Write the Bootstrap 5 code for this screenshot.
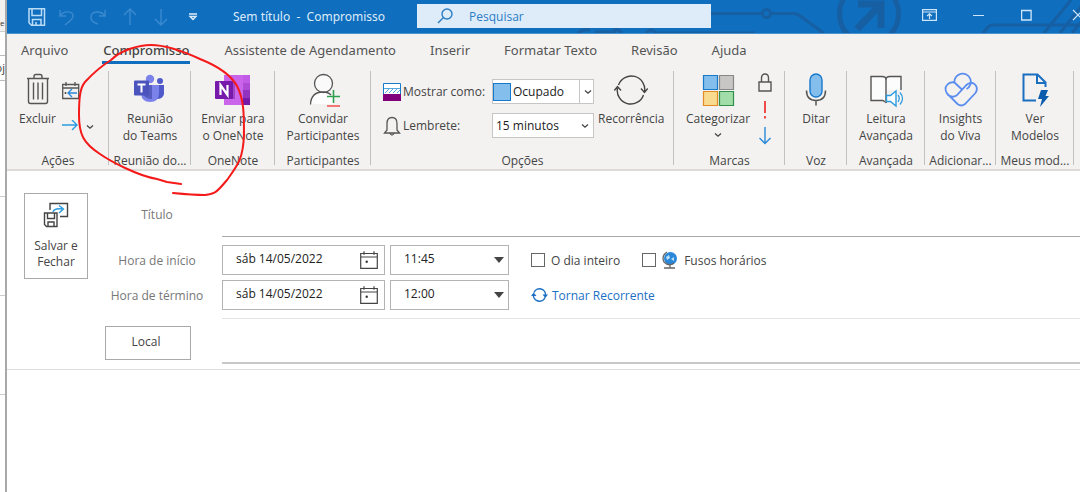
<!DOCTYPE html>
<html lang="pt-BR">
<head>
<meta charset="utf-8">
<meta name="viewport" content="width=device-width, initial-scale=1">
<title>Sem título - Compromisso</title>
<link href="https://cdn.jsdelivr.net/npm/bootstrap@5.3.0/dist/css/bootstrap.min.css" rel="stylesheet">
<style>
  body { font-family: "Open Sans", "Noto Sans", sans-serif; font-size: 12px; line-height: 17px; color: #444; background: #fff; overflow: hidden; }
  button, input, select { font: inherit; color: inherit; }
  svg { display: block; flex: none; fill: none; }
  .behind { width: 7px; border-right: 2px solid #a9a9a9; background: #fff; overflow: hidden; color: #333; }
  .behind-head { height: 32px; background: #f3f2f1; border-bottom: 1px solid #ccc; padding-top: 14px; font-size: 8px; }
  .behind-tab { height: 26px; margin-top: 23px; border: solid #bbb; border-width: 1px 0; line-height: 24px; font-size: 11px; }
  .behind-cell { height: 99px; border-top: 1px solid #ccc; }
  .behind-cell.first { margin-top: 115px; }
  .titlebar { height: 34px; background: #106ebe; color: #dcecfa; border-bottom: 1px solid #4b91ce; }
  .titlebar .circuit { right: 0; top: 0; }
  .tool { background: none; border: 0; padding: 0; }
  .quick { width: 410px; padding-left: 20px; }
  .quick .tool { width: 31px; }
  .doc-name { font-family: "Noto Sans", "Open Sans", sans-serif; }
  .search { background: #deecf9; width: 294px; height: 24px; color: #2b7cc4; padding-left: 20px; }
  .search input { background: none; border: 0; outline: 0; }
  .search input::placeholder { color: #2b7cc4; opacity: 1; }
  .wincontrols { margin-right: -4px; padding-bottom: 3px; }
  .tabs { background: #f3f2f1; height: 32px; font-family: "Noto Sans", "Open Sans", sans-serif; font-size: 13px; padding-left: 14px; gap: 34px; color: #555; }
  .tabs a { color: inherit; text-decoration: none; padding-top: 8px; height: 30px; white-space: nowrap; }
  .tabs a.current { border-bottom: 3px solid #106ebe; font-weight: 500; color: #444; padding-left: 1px; padding-right: 1px; }
  .ribbon { background: #f3f2f1; height: 105px; border-bottom: 2px solid #dcdbda; }
  .group { padding: 6px 0 0; height: 99px; position: relative; flex: none; }
  .group::after { content: ""; position: absolute; right: 0; top: 5px; bottom: 0; width: 1px; background: #c3c1bf; }
  .group-name { position: absolute; left: 0; right: 0; top: 86px; text-align: center; white-space: nowrap; }
  .w-62 { width: 62px; } .w-71 { width: 71px; } .w-78 { width: 78px; } .w-82 { width: 82px; }
  .w-84 { width: 84px; } .w-96 { width: 96px; } .w-102 { width: 102px; } .w-111 { width: 111px; } .w-303 { width: 303px; }
  .big { background: none; border: 0; padding: 0; text-align: center; white-space: nowrap; display: flex; flex-direction: column; align-items: center; }
  .big svg { margin-bottom: 2px; }
  .options { padding: 7px 0 0 12px; row-gap: 9px; display: grid; grid-template-columns: 109px 102px; }
  .options label { display: flex; align-items: center; gap: 2px; white-space: nowrap; }
  .combo { background: #fff; border: 1px solid #c8c6c4; height: 25px; }
  .combo select { appearance: none; background: none; border: 0; outline: 0; padding: 0 3px; color: #222; min-width: 0; }
  .combo select.after-swatch { padding: 0 0 0 2px; }
  .swatch { width: 18px; height: 18px; background: #83beec; border: 1px solid #1979ca; flex: none; }
  .combo .split { border-left: 1px solid #c8c6c4; height: 23px; width: 14px; display: flex; align-items: center; }
  .form-area { padding: 21px 0 5px 17px; border-bottom: 1px solid #dedede; }
  .boxbtn { background: #fff; border: 1px solid #aaa; }
  .save { width: 64px; height: 86px; line-height: 16px; margin-top: 1px; }
  .save svg { margin-bottom: 10px; }
  .fields { display: grid; grid-template-columns: 104px 1fr; column-gap: 13px; margin-left: 17px; }
  .fields .name { color: #777; text-align: center; align-self: center; }
  .fields .name.upper { padding-bottom: 8px; }
  .plain { border: 0; outline: 0; width: 100%; padding: 0 14px; }
  .line-title { height: 45px; border-bottom: 1px solid #aaa; margin-bottom: 8px; }
  .line-local { height: 46px; border-top: 1px solid #e3e3e3; border-bottom: 2px solid #c8c8c8; margin-top: 8px; }
  .when { height: 30px; gap: 5px; }
  .second { margin-top: 5px; }
  .field { border: 1px solid #b5b3b1; height: 30px; color: #222; background: #fff; }
  .field.date { width: 163px; } .field.time { width: 119px; }
  .field input, .field select { appearance: none; border: 0; outline: 0; background: none; padding: 0 0 4px 13px; width: 100%; min-width: 0; }
  .pick { margin-right: 6px; }
  .check-line { display: flex; align-items: center; gap: 6px; margin-left: 17px; }
  .tick { width: 14px; height: 14px; appearance: none; border: 1px solid #666; margin: 0; background: #fff; }
  .tick:checked { background: #106ebe; }
  .recur { color: #1a6fc4; text-decoration: none; gap: 4px; }
  .local { height: 34px; width: 86px; padding: 0 4px 4px 0; }
  .ink { position: absolute; left: 0; top: 0; pointer-events: none; }
</style>
</head>
<body>
<svg width="0" height="0" class="position-absolute" aria-hidden="true">
  <symbol id="chev" viewBox="0 0 8 6"><path d="M1 1.5l3 2.7 3-2.7" stroke="#444" stroke-width="1.3" fill="none"/></symbol>
  <symbol id="cal" viewBox="0 0 18 18"><path d="M.7 2.5h16.600v14.800H.7zM.7 6h16.600M4 .3v3.500M14 .3v3.500" stroke="#444" stroke-width="1.200" fill="none"/><circle cx="6.700" cy="10.700" r="1.200" fill="#333"/></symbol>
  <symbol id="loop" viewBox="0 0 34 32"><path d="M4.500 11A13.500 13.500 0 0 1 30.500 18M29.500 21A13.500 13.500 0 0 1 3.500 14M27 14.500l3.500 4 3.300-4M.3 16.500L3.500 12.500l3.500 4" stroke="currentColor" fill="none"/></symbol>
  <symbol id="loop-small" viewBox="0 0 17 16"><path d="M3 5.500A6 6 0 0 1 14.500 8.500M14 10.500A6 6 0 0 1 2.500 7.500" stroke="currentColor" stroke-width="1.500" fill="none"/><path d="M11.500 7.500H17l-2.700 3.500zM0 9h5.500L2.700 5.500z" fill="currentColor"/></symbol>
</svg>
<div class="d-flex vh-100 position-relative">
  <div class="behind flex-shrink-0" aria-hidden="true">
    <div class="behind-head">e</div>
    <div class="behind-tab d-flex justify-content-end">oj</div>
    <div class="behind-cell first"></div><div class="behind-cell"></div><div class="behind-cell"></div>
  </div>
  <div class="flex-grow-1 overflow-hidden">
    <header class="titlebar d-flex position-relative overflow-hidden">
      <svg class="circuit position-absolute" width="520" height="33" stroke="#175fa3" stroke-width="3">
        <path d="M18 33q3-4 12-3M35 32h21M62 33q-3-4-9-3M86 33q5-6 10 0M95 33h100M150 13.500h52M211 13.500h22q4 0 8 3l23 17M500 33L528-2M512 33L530 12M484 33l27-33"/>
        <circle cx="206.500" cy="13.500" r="4"/><circle cx="309" cy="14" r="29.500" stroke-width="5"/>
        <path d="M298 4h23v24M320 5l-23 24" stroke-width="7"/><path d="M423 33l5-6q2-2 5-2h87"/>
      </svg>
      <div class="quick d-flex align-items-center position-relative flex-shrink-0">
        <button class="tool" aria-label="Salvar"><svg width="20" height="18" stroke="#b9dcf7" stroke-width="1.500"><path d="M2 .8h15.500v16.400H4.500L2 14.700zM5 1v6.500h9.500V1M5.500 17v-5.500h8.500V17M9 17v-3"/></svg></button>
        <button class="tool" aria-label="Desfazer"><svg width="18" height="18" stroke="#3b8ad0" stroke-width="1.400"><path d="M2 2v6h6M2 8c4-6 13-5 13 0 0 4-5 6-8 9"/></svg></button>
        <button class="tool" aria-label="Refazer"><svg width="18" height="18" stroke="#3b8ad0" stroke-width="1.400"><path d="M16 2v6h-6M16 8C12 2 2 3 2 9c0 4 3 6 7 7"/></svg></button>
        <button class="tool" aria-label="Item anterior"><svg width="18" height="18" stroke="#3b8ad0" stroke-width="1.400"><path d="M10 17V1M4 7l6-6 6 6"/></svg></button>
        <button class="tool" aria-label="Próximo item"><svg width="18" height="18" stroke="#3b8ad0" stroke-width="1.400"><path d="M10 1v16M4 11l6 6 6-6"/></svg></button>
        <button class="tool" aria-label="Personalizar"><svg class="ms-1" width="12" height="8" stroke="#dcecfa" stroke-width="1.300"><path d="M3 1h8M4 3.500l3 3 3-3z"/></svg></button>
        <span class="doc-name ms-3 ps-1 text-nowrap">Sem título&nbsp; -&nbsp; Compromisso</span>
      </div>
      <label class="search d-flex align-items-center position-relative mt-1 gap-3" aria-label="Pesquisar">
        <svg width="16" height="16" stroke="#2b7cc4" stroke-width="1.400"><circle cx="10" cy="6" r="5"/><path d="M6.500 9.500L1 15"/></svg>
        <input class="flex-grow-1 p-0" type="search" placeholder="Pesquisar">
      </label>
      <div class="wincontrols d-flex align-items-center ms-auto position-relative gap-4">
        <button class="tool me-2" aria-label="Opções da faixa"><svg width="15" height="12" stroke="#cfe6fa" stroke-width="1.200"><path d="M.6.6h13.800v10.800H.6zM.6 3h13.800M7.500 10V5M5 7l2.500-2.300L10 7"/></svg></button>
        <button class="tool ms-1 me-2" aria-label="Minimizar"><svg width="12" height="12" stroke="#cfe6fa"><path d="M0 6.500h11"/></svg></button>
        <button class="tool ms-1 me-3" aria-label="Maximizar"><svg width="11" height="12" stroke="#cfe6fa" stroke-width="1.300"><path d="M.6 1.500h9.500V11H.6z"/></svg></button>
        <button class="tool" aria-label="Fechar"><svg width="12" height="12" stroke="#cfe6fa" stroke-width="1.200"><path d="M1 1l10 10M11 1L1 11"/></svg></button>
      </div>
    </header>
    <nav class="tabs d-flex">
      <a href="#">Arquivo</a><a href="#" class="current" aria-current="page">Compromisso</a><a href="#">Assistente de Agendamento</a><a href="#">Inserir</a><a href="#">Formatar Texto</a><a href="#">Revisão</a><a href="#">Ajuda</a>
    </nav>
    <section class="ribbon d-flex">
      <div class="group w-102 d-flex">
        <button class="big ms-2 ps-1"><svg width="36" height="36" stroke="#555" stroke-width="1.400"><path d="M7 6.500h22M14 6V4.500q0-2 2-2h4q2 0 2 2V6M8.500 7v22.500q0 2 2 2h15q2 0 2-2V7M13.500 10.500v17M18 10.500v17M22.500 10.500v17"/></svg>Excluir</button>
        <div class="ms-1 pt-2">
          <button class="tool" aria-label="Copiar para Meu Calendário"><svg width="20" height="20" stroke="#555" stroke-width="1.300"><path d="M3 4.500h16M2.700 4.500v14h16v-14zM2.700 8h16M6 2v4M15 2v4"/><path d="M17 13H8M12 9l-4 4 4 4" stroke="#2b88d8"/><circle cx="5.500" cy="13" r="1" fill="#444" stroke="none"/></svg></button>
          <button class="tool d-flex align-items-center pt-3" aria-label="Encaminhar"><svg width="18" height="14" stroke="#2b9be0" stroke-width="1.400"><path d="M2 5h15M12 0l5 5-5 5"/></svg><svg class="ms-2" width="8" height="6"><use href="#chev"/></svg></button>
        </div>
        <div class="group-name">Ações</div>
      </div>
      <div class="group w-82"><button class="big w-100"><svg width="36" height="36"><circle cx="18" cy="7" r="4.200" fill="#7b83eb"/><circle cx="28" cy="9" r="3" fill="#5059c9"/><path d="M20 13h12v9q-1 5-7 5z" fill="#5059c9"/><path d="M9 13h18v8q0 9-9 9-8 0-9-8z" fill="#7b83eb"/><path d="M10 13h10v14q-7 0-9-5z" fill="#3e45a5" opacity=".6"/><rect x="2" y="8.500" width="15" height="15" rx="1" fill="#4b53bc"/><path d="M5.500 12.500h8M9.500 12.500v8" stroke="#fff" stroke-width="2"/></svg>Reunião<br>do Teams</button><div class="group-name">Reunião do...</div></div>
      <div class="group w-84"><button class="big w-100"><svg width="36" height="36"><path d="M9 3h26v30H9z" fill="#ca64ea"/><path d="M28 3h7v8h-7z" fill="#c25ce8"/><path d="M28 11h7v7h-7z" fill="#ae4bd5"/><path d="M28 18h7v8h-7z" fill="#9332bf"/><path d="M28 26h7v7h-7z" fill="#7719aa"/><path d="M10 9h10v18H10z" fill="#7b2caf" opacity=".55"/><rect y="9" width="18" height="18" rx="1" fill="#7719aa"/><path d="M5.500 23V13l7 10V13" stroke="#fff" stroke-width="2.200"/></svg>Enviar para<br>o OneNote</button><div class="group-name">OneNote</div></div>
      <div class="group w-96"><button class="big w-100"><svg width="36" height="36" stroke="#555" stroke-width="1.300"><path d="M6 32c0-18 18-17 22-6v6z" fill="#fff" stroke="none"/><circle cx="18.500" cy="11.500" r="9" fill="#fafafa"/><path d="M5.500 32.500Q6 20 18 20q5 0 8 3"/><path d="M28.500 18v13M22 24.500h13" stroke="#2e9e4f" stroke-width="1.600"/><path d="M22 34h13" stroke="#e33"/></svg>Convidar<br>Participantes</button><div class="group-name">Participantes</div></div>
      <div class="group w-303 d-flex">
        <div class="options align-content-start">
          <label for="status"><svg width="18" height="18"><path d="M.5.500h17v17H.5z" fill="#fff" stroke="#1979ca"/><path d="M1 5.500h16M2 10l4-4M6 10l4-4M10 10l4-4M14 10l3-3" stroke="#56a6e0"/><path d="M0 11h18v7H0z" fill="#80007b"/></svg>Mostrar como:</label>
          <div class="combo d-flex align-items-center"><span class="swatch"></span><select id="status" class="after-swatch flex-grow-1"><option>Ocupado</option><option>Livre</option></select><span class="split"><svg class="ms-1" width="8" height="6"><use href="#chev"/></svg></span></div>
          <label for="reminder"><svg width="18" height="20" stroke="#555" stroke-width="1.300"><path d="M4 14V7.500q0-6 5-6t5 6V14l2.500 3h-15zM7 17.500q2 3 4 0"/></svg>Lembrete:</label>
          <div class="combo d-flex align-items-center"><select id="reminder" class="flex-grow-1"><option>15 minutos</option><option>30 minutos</option></select><svg class="me-1" width="8" height="6"><use href="#chev"/></svg></div>
        </div>
        <button class="big ms-1"><svg width="34" height="36" stroke-width="1.400"><use href="#loop" x="0" y="2" width="34" height="32"/></svg>Recorrência</button>
        <div class="group-name">Opções</div>
      </div>
      <div class="group w-111 d-flex">
        <button class="big ms-2 ps-1"><svg width="36" height="36" stroke-width="1.200"><path d="M3.500 3.500h14v14h-14z" fill="#83beec" stroke="#1979ca"/><path d="M19.500 3.500h14v14h-14z" fill="#c8c6c4" stroke="#888"/><path d="M3.500 19.500h14v14h-14z" fill="#f8db8f" stroke="#e38b24"/><path d="M19.500 19.500h14v14h-14z" fill="#a1dda8" stroke="#309048"/></svg>Categorizar<svg class="mt-1" width="8" height="8"><use href="#chev"/></svg></button>
        <div class="d-flex flex-column ms-2 gap-2">
          <button class="tool" aria-label="Particular"><svg width="14" height="21" stroke="#555" stroke-width="1.400"><path d="M1 10h12v9H1zM3.500 10V6q0-4 3.500-4t3.500 4v4"/></svg></button>
          <button class="tool" aria-label="Alta prioridade"><svg width="14" height="18" stroke="#f03a3a" stroke-width="1.800"><path d="M7 0v12M7 15v2.500"/></svg></button>
          <button class="tool" aria-label="Baixa prioridade"><svg width="14" height="18" stroke="#2b88d8" stroke-width="1.400"><path d="M7 0v16M1.500 11L7 16.500l5.500-5.500"/></svg></button>
        </div>
        <div class="group-name">Marcas</div>
      </div>
      <div class="group w-62"><button class="big w-100"><svg width="36" height="36"><rect x="12" y="2" width="12" height="23" rx="6" fill="#83beec" stroke="#1979ca" stroke-width="1.400"/><path d="M8.500 18.500q0 10 9.500 10t9.500-10M18 28.500v5" stroke="#555" stroke-width="1.500"/></svg>Ditar</button><div class="group-name">Voz</div></div>
      <div class="group w-78"><button class="big w-100"><svg width="36" height="36"><path d="M3 4.500h11q4 0 4 3 0-3 4-3h11v24H21l-3 2-3-2H3z" fill="#fcfcfc" stroke="#555" stroke-width="1.400"/><path d="M18 7v22" stroke="#555" stroke-width="1.400"/><path d="M19 36V18h17v18z" fill="#f3f2f1"/><path d="M18.500 23.500h4l5.500-4.500v15l-5.500-4.500h-4z" fill="#fff" stroke="#2b9be0" stroke-width="1.400"/><path d="M30 23q2.500 3 0 7M32 20.500q5 6 0 12" stroke="#2b9be0" stroke-width="1.200"/></svg>Leitura<br>Avançada</button><div class="group-name">Avançada</div></div>
      <div class="group w-71"><button class="big w-100"><svg width="36" height="36" stroke="#5b8def" stroke-width="1.800"><path d="M11.500 11A8.200 8.200 0 1 1 23.500 17M11.500 10.500Q7 9.500 4 13t0 8.500L14.500 32q3.800 3 7.500 0L32 21.500q3.500-4 .5-8.500-2-2.500-5-2.200M27.500 10.800q-2 .2-4 2.200L13.500 23.500q-4.500 3-9-1M11.500 10.500l8 7.500"/></svg>Insights<br>do Viva</button><div class="group-name">Adicionar...</div></div>
      <div class="group w-78"><button class="big w-100"><svg width="36" height="36" stroke="#1a6fc0" stroke-width="2"><path d="M19 28.500H6.500v-26h14l8 8V15M20 3v8h8"/><path d="M24 18h7l-2.500 6h3.500L23 35l2-8h-4z" fill="#0b5cad" stroke="none"/></svg>Ver<br>Modelos</button><div class="group-name">Meus mod...</div></div>
    </section>
    <main class="form-area d-flex align-items-start">
      <button class="boxbtn save p-0"><svg class="mx-auto" width="26" height="26" stroke="#444" stroke-width="1.400"><path d="M7 8V1.500h17.500v13H17M1.500 11H14v13.500H3.500l-2-2zM4.500 11v5.500h7V11M5 24v-4h6v4"/><path d="M10 10q1-4 9-3M16 3.500l4.500 3.500-4.500 4" stroke="#2b9be0"/></svg>Salvar e<br>Fechar</button>
      <div class="fields flex-grow-1">
        <label class="name upper" for="title">Título</label>
        <div class="line-title"><input id="title" class="plain h-100"></div>
        <label class="name" for="start">Hora de início</label>
        <div class="when d-flex align-items-center">
          <div class="field date d-flex align-items-center"><input id="start" value="sáb 14/05/2022"><button class="tool pick" aria-label="Escolher data de início"><svg width="18" height="18"><use href="#cal"/></svg></button></div>
          <div class="field time d-flex align-items-center"><select aria-label="Horário de início"><option>11:45</option></select><svg class="me-1" width="10" height="6"><path d="M0 0h10L5 6z" fill="#444"/></svg></div>
          <label class="check-line"><input class="tick" type="checkbox">O dia inteiro</label>
          <label class="check-line"><input class="tick" type="checkbox"><svg width="16" height="18"><circle cx="8.500" cy="7.500" r="6.500" fill="#2b88d8"/><path d="M4 6l3-2 1 3-3 2zM9 8l3-2v4z" fill="#bfe0f7"/><path d="M5 1Q-1 5 2 11q5 5 10 1M8 14v3M2 17h11" stroke="#666" stroke-width="1.300"/></svg>Fusos horários</label>
        </div>
        <label class="name second" for="end">Hora de término</label>
        <div class="when second d-flex align-items-center">
          <div class="field date d-flex align-items-center"><input id="end" value="sáb 14/05/2022"><button class="tool pick" aria-label="Escolher data de término"><svg width="18" height="18"><use href="#cal"/></svg></button></div>
          <div class="field time d-flex align-items-center"><select aria-label="Horário de término"><option>12:00</option></select><svg class="me-1" width="10" height="6"><path d="M0 0h10L5 6z" fill="#444"/></svg></div>
          <a href="#" class="check-line recur"><svg width="17" height="16"><use href="#loop-small"/></svg>Tornar Recorrente</a>
        </div>
        <button class="boxbtn local mt-3">Local</button>
        <div class="line-local"><input class="plain h-100" aria-label="Local"></div>
      </div>
    </main>
  </div>
  <svg class="ink" width="260" height="210" stroke="#f51a1a" stroke-width="2" stroke-linecap="round" aria-hidden="true"><path d="M181 184l-14-2-10-3C138 176 110 161 100 154 83 143 79 134 79 115 79 98 80 88 85 82 96 70 103 65 111 60 121 50 139 45 151 45c15 0 36 8 49 14 20 8 31 16 37 27 7 13 7 29 7 49-1 24-6 30-17 45-10 12-12 14-22 15-12 0-22-1-32-2"/></svg>
</div>
<script src="https://cdn.jsdelivr.net/npm/bootstrap@5.3.0/dist/js/bootstrap.bundle.min.js"></script>
</body>
</html>
